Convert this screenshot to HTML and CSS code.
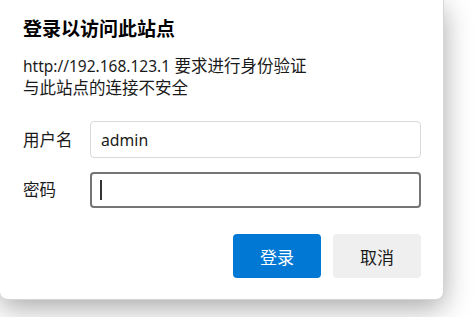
FILE: index.html
```html
<!DOCTYPE html>
<html lang="zh-CN">
<head>
<meta charset="utf-8">
<link rel="stylesheet" href="styles.css">
</head>
<body>
<div class="dialog">
  <h1 class="title">登录以访问此站点</h1>
  <p class="message"><span class="latin">http://192.168.123.1</span> 要求进行身份验证<br>与此站点的连接不安全</p>
  <div class="form">
    <label class="label">用户名</label>
    <div class="input"><span class="latin-input">admin</span></div>
    <label class="label">密码</label>
    <div class="input focused"><span class="caret"></span></div>
  </div>
  <div class="actions">
    <button class="btn primary">登录</button>
    <button class="btn secondary">取消</button>
  </div>
</div>
</body>
</html>
```
FILE: styles.css
```css
html, body {
  margin: 0;
  padding: 0;
  background: #ffffff;
  width: 474px;
  height: 317px;
  overflow: hidden;
}
body {
  font-family: "Noto Sans", "Noto Sans CJK SC", sans-serif;
  color: #1f1f1f;
}
.dialog {
  box-sizing: border-box;
  width: 444px;
  height: 300px;
  background: #ffffff;
  border-right: 1px solid #d6d6d6;
  border-bottom: 1px solid #d6d6d6;
  border-radius: 0 0 8px 8px;
  box-shadow: 0 8px 28px rgba(0, 0, 0, 0.34);
  padding: 17px 22px 0 23px;
}
.title {
  margin: 0;
  font-size: 19px;
  line-height: 24px;
  font-weight: 700;
  color: #000;
}
.message {
  margin: 14px 0 0;
  font-size: 16.5px;
  line-height: 22px;
  color: #1a1a1a;
}
.latin {
  font-size: 15.5px;
}
.form {
  margin-top: 22px;
  display: grid;
  grid-template-columns: 67px 331px;
  row-gap: 14px;
  align-items: center;
}
.label {
  font-size: 16.5px;
  line-height: 22px;
  color: #1a1a1a;
}
.input {
  box-sizing: border-box;
  height: 37px;
  border: 1px solid #d9d9d9;
  border-radius: 4px;
  padding: 0 10px;
  color: #1a1a1a;
  display: flex;
  align-items: center;
}
.latin-input {
  font-size: 15.8px;
}
.input.focused {
  height: 36px;
  border: 2px solid #757575;
  padding: 0 8px;
}
.caret {
  display: block;
  width: 2px;
  height: 20px;
  background: #333;
}
.actions {
  margin-top: 26px;
  display: flex;
  justify-content: flex-end;
  gap: 12px;
}
.btn {
  width: 88px;
  height: 44px;
  border: none;
  border-radius: 4px;
  font-family: inherit;
  font-size: 17px;
  padding: 0;
}
.primary {
  background: #0078d4;
  color: #fff;
}
.secondary {
  background: #efefef;
  color: #1a1a1a;
}
```
